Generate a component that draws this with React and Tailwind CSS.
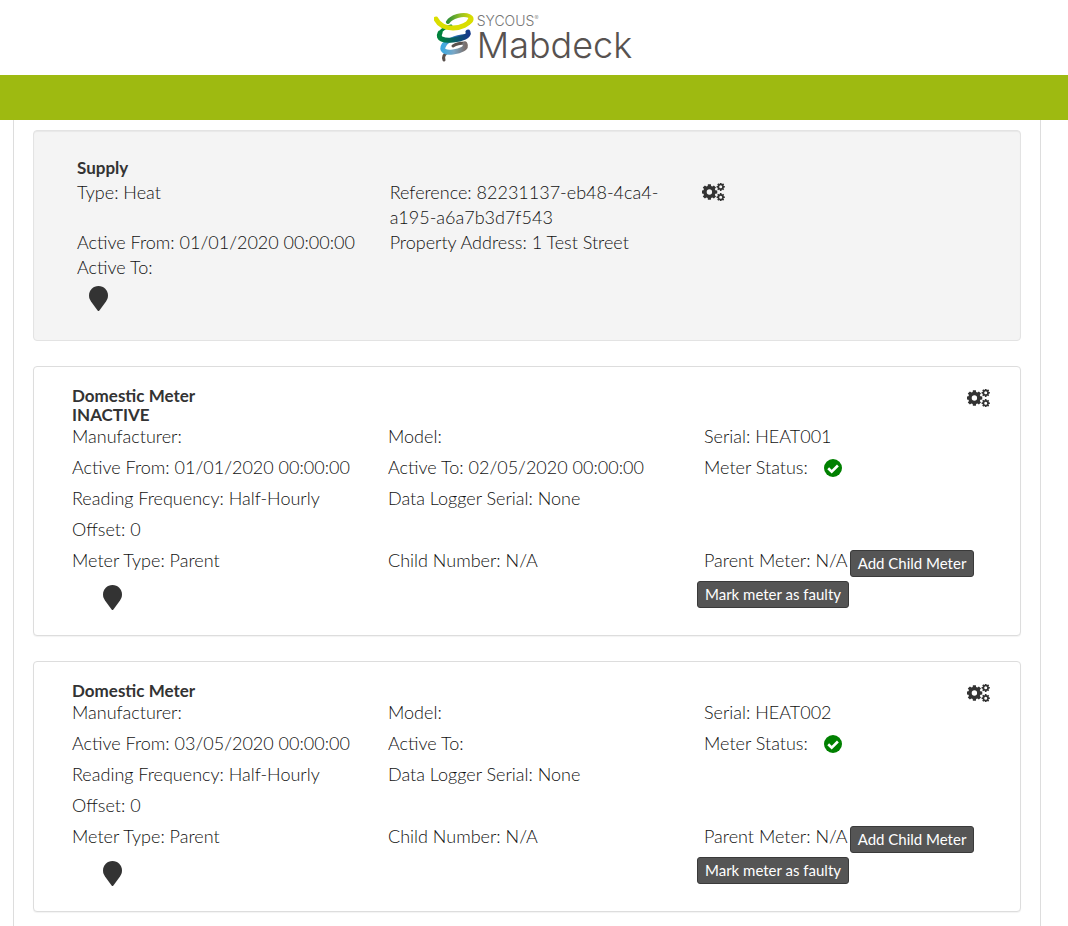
import React from 'react';

const METERS = [
  { serial: 'HEAT001', inactive: true, from: '01/01/2020 00:00:00', to: '02/05/2020 00:00:00' },
  { serial: 'HEAT002', inactive: false, from: '03/05/2020 00:00:00', to: '' },
];

export default function App() {
  return (
    <div className="min-h-screen bg-white text-[#111] text-[18px] leading-[25px] font-light font-['Lato',sans-serif]">
      <header>
        <div className="h-[75px] flex justify-center pt-3">
          <Logo />
        </div>
        <div className="h-[45px] bg-[#9eba11]" />
      </header>

      <main className="ml-[13px] mr-[27px] min-h-[806px] border-x border-[#ddd] px-[19px] pt-[10px] pb-[15px] flex flex-col gap-[25px]">
        <Supply />
        {METERS.map((m) => (
          <Meter key={m.serial} meter={m} />
        ))}
      </main>
    </div>
  );
}

function Supply() {
  return (
    <section className="rounded border border-[#e3e3e3] bg-[#f4f4f4] shadow-[inset_0_1px_1px_rgba(0,0,0,0.05)] pl-7 pr-5 pt-6 pb-[29px]">
      <h2 className="px-[15px] text-[17px] font-bold text-[#333]">Supply</h2>
      <div className="grid grid-cols-3">
        <p className="px-[15px]">Type: Heat</p>
        <p className="px-[15px]">Reference: 82231137-eb48-4ca4-a195-a6a7b3d7f543</p>
        <div className="px-[15px]">
          <SettingsButton label="Supply settings" />
        </div>
        <p className="px-[15px]">Active From: 01/01/2020 00:00:00</p>
        <p className="px-[15px]">Property Address: 1 Test Street</p>
      </div>
      <p className="px-[15px]">Active To:</p>
      <div className="pl-[27px] pt-[6px]">
        <PinButton />
      </div>
    </section>
  );
}

function Meter({ meter }) {
  return (
    <section className="rounded border border-[#ddd] bg-white shadow-[0_1px_1px_rgba(0,0,0,0.05)] pl-[23px] pr-[15px] pt-[19px] pb-[25px]">
      <div className="flex items-start justify-between px-[15px]">
        <h2 className="text-[17px] font-bold leading-[19px] text-[#333]">
          <span className="block">Domestic Meter</span>
          {meter.inactive && <span className="block">INACTIVE</span>}
        </h2>
        <div className="h-[18px]">
          <SettingsButton label={`Meter ${meter.serial} settings`} />
        </div>
      </div>

      <div className="grid grid-cols-3 auto-rows-[31px]">
        <Cell>Manufacturer:</Cell>
        <Cell>Model:</Cell>
        <Cell>Serial: {meter.serial}</Cell>

        <Cell>Active From: {meter.from}</Cell>
        <Cell>Active To: {meter.to}</Cell>
        <Cell>
          <span className="flex items-center gap-4">
            Meter Status:
            <CheckIcon />
          </span>
        </Cell>

        <Cell>Reading Frequency: Half-Hourly</Cell>
        <Cell>Data Logger Serial: None</Cell>
        <Cell />

        <Cell>Offset: 0</Cell>
        <Cell />
        <Cell />

        <Cell>Meter Type: Parent</Cell>
        <Cell>Child Number: N/A</Cell>
        <Cell>
          <span className="flex items-start gap-0.5">
            Parent Meter: N/A
            <DarkButton>Add Child Meter</DarkButton>
          </span>
        </Cell>

        <div className="pl-[46px] pt-[6px]">
          <PinButton />
        </div>
        <div />
        <div className="pl-2">
          <DarkButton>Mark meter as faulty</DarkButton>
        </div>
      </div>
    </section>
  );
}

function Cell({ children }) {
  return <div className="px-[15px] whitespace-nowrap">{children}</div>;
}

function DarkButton({ children }) {
  return (
    <button className="mt-0.5 block h-[27px] shrink-0 rounded-[3px] border border-[#3a3a3a] bg-[#555] px-[7px] text-[15px] font-normal leading-[25px] text-white hover:bg-[#444]">
      {children}
    </button>
  );
}

function SettingsButton({ label }) {
  return (
    <button aria-label={label} className="block pt-[3px] text-[#333] hover:text-black">
      <svg className="w-[23px] h-[18px]" viewBox="0 0 23 18" fill="currentColor" fillRule="evenodd">
        <path d={gear(7.4, 9, 8, 6.2, 2.7)} />
        <path d={gear(18.7, 3.8, 4.2, 3.2, 1.5)} />
        <path d={gear(18.7, 14.2, 4.2, 3.2, 1.5)} />
      </svg>
    </button>
  );
}

// Eight-toothed cog with a round hole
function gear(cx, cy, outer, inner, hole) {
  const pts = [];
  for (let i = 0; i < 8; i++) {
    const a = (i * Math.PI) / 4;
    [
      [inner, -0.28],
      [outer, -0.19],
      [outer, 0.19],
      [inner, 0.28],
    ].forEach(([r, d]) => {
      pts.push(`${(cx + r * Math.cos(a + d)).toFixed(2)} ${(cy + r * Math.sin(a + d)).toFixed(2)}`);
    });
  }
  return `M${pts.join('L')}ZM${cx - hole} ${cy}a${hole} ${hole} 0 1 0 ${hole * 2} 0a${hole} ${hole} 0 1 0 ${-hole * 2} 0Z`;
}

function CheckIcon() {
  return (
    <svg className="size-[18px]" viewBox="0 0 18 18" role="img" aria-label="OK">
      <circle cx="9" cy="9" r="9" fill="#008000" />
      <path d="M4.2 9.3l3.5 3.4 6.2-6.2" fill="none" stroke="#fff" strokeWidth="2.6" />
    </svg>
  );
}

function PinButton() {
  return (
    <button aria-label="Show location" className="block text-[#333] hover:text-black">
      <svg className="w-[19px] h-[25px]" viewBox="0 0 19 25" fill="currentColor">
        <path d="M9.5 0C4.2 0 0 4.2 0 9.4c0 2.3.8 4.1 2 6l6.6 9.1q.9 1 1.8 0L17 15.4c1.2-1.9 2-3.7 2-6C19 4.200 14.800 0 9.500 0Z" />
      </svg>
    </button>
  );
}

// Ribbon spiral plus the two-line wordmark
function Logo() {
  return (
    <a href="#" aria-label="Sycous Mabdeck" className="flex pr-0.5">
      <svg width="43" height="50" viewBox="0 0 43 50" fill="none" strokeLinecap="round">
        <defs>
          <linearGradient id="top" x1="0" x2="1">
            <stop offset="0" stopColor="#2f8f36" />
            <stop offset="0.5" stopColor="#8fbd27" />
            <stop offset="1" stopColor="#d9dc00" />
          </linearGradient>
          <linearGradient id="mid" x1="0" x2="1">
            <stop offset="0" stopColor="#00833c" />
            <stop offset="0.5" stopColor="#075f62" />
            <stop offset="1" stopColor="#163a8a" />
          </linearGradient>
          <linearGradient id="midBack" x1="0" x2="1">
            <stop offset="0" stopColor="#42a8e0" />
            <stop offset="1" stopColor="#173f90" />
          </linearGradient>
          <linearGradient id="low" x1="0" x2="1">
            <stop offset="0" stopColor="#3fa9e0" />
            <stop offset="0.5" stopColor="#7aa6c4" />
            <stop offset="1" stopColor="#7a706d" />
          </linearGradient>
        </defs>
        <path d="M31 31c-5 0-9 1-12 3M14 40c-4 2-5 5-4 8" stroke="#5a514d" strokeWidth="3" />
        <path d="M10 33c4-6 13-8 22-9" stroke="url(#midBack)" strokeWidth="4" />
        <path d="M10 33c-4 6 2 8 9 7 8-1 14-4 12-8" stroke="url(#low)" strokeWidth="5" />
        <path d="M6 21c-3 6 4 8 13 7 9-1 17-4 15-8" stroke="url(#mid)" strokeWidth="5" />
        <path d="M6 21c2-4 6-6 11-7" stroke="#00833c" strokeWidth="3" />
        <path d="M14 10c3-5 15-9 21-6 4 2 3 5-1 7" stroke="url(#top)" strokeWidth="4" />
        <path d="M2 7c3 6 9 9 17 9 8 0 16-4 17-8" stroke="#dade00" strokeWidth="5" />
      </svg>
      <span className="flex flex-col font-light font-['Inter',sans-serif]">
        <span className="flex items-start text-[14px] leading-[18px] text-[#777]">
          SYCOUS<span className="text-[6px] leading-[12px]">®</span>
        </span>
        <span className="text-[36px] leading-[30px] text-[#575250]">Mabdeck</span>
      </span>
    </a>
  );
}
